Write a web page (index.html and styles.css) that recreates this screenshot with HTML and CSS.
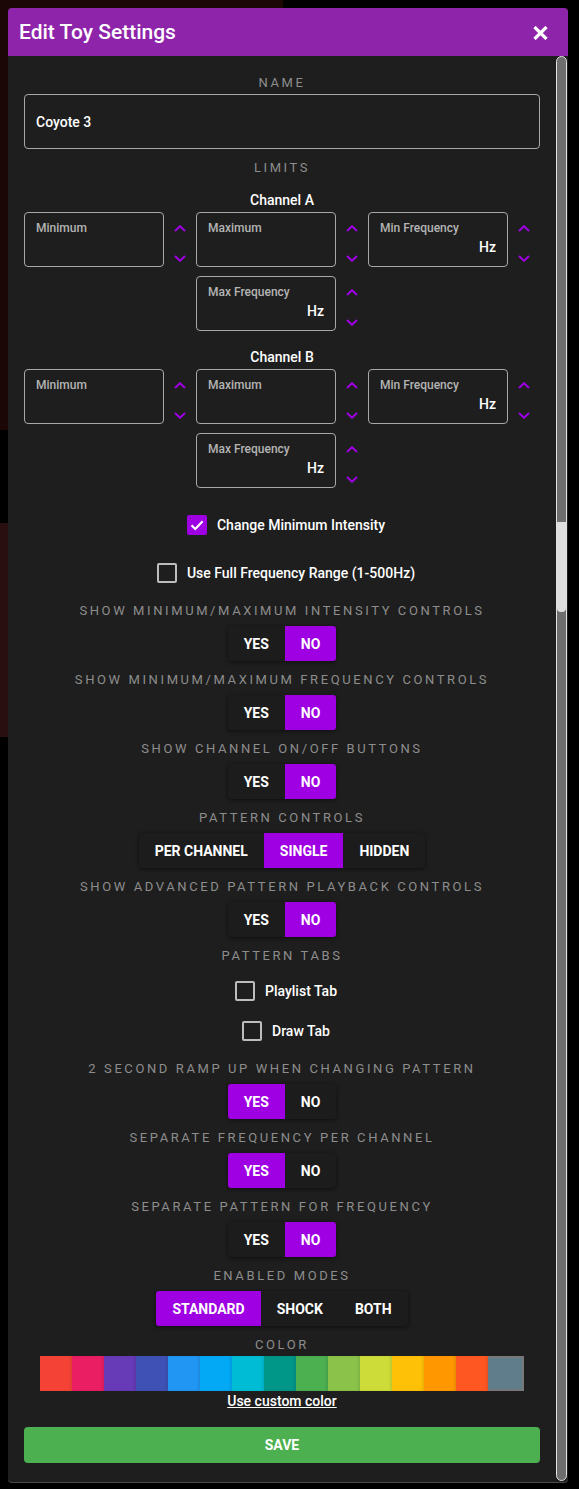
FILE: index.html
```html
<!DOCTYPE html>
<html lang="en">
<head>
<meta charset="utf-8">
<title>Edit Toy Settings</title>
<link rel="stylesheet" href="styles.css">
</head>
<body>
<div class="modal">
  <header class="modal-header">
    <h1 class="modal-title">Edit Toy Settings</h1>
    <button class="close-btn" aria-label="Close">
      <svg width="15" height="14" viewBox="0 0 15 14"><path d="M1.5 1 L13.5 13 M13.5 1 L1.5 13" stroke="#fff" stroke-width="3.2" fill="none"/></svg>
    </button>
  </header>
  <div class="modal-body">
    <div class="section-label">NAME</div>
    <div class="text-field">Coyote 3</div>

    <div class="section-label limits">LIMITS</div>

    <div class="channel-title first">Channel A</div>
    <div class="limit-grid">
      <div class="limit-cell"><div class="num-field"><span class="num-label">Minimum</span></div><div class="spinner"><svg class="chev" viewBox="0 0 12 7"><polyline points="1,6 6,1.2 11,6"/></svg><svg class="chev" viewBox="0 0 12 7"><polyline points="1,1 6,5.8 11,1"/></svg></div></div>
      <div class="limit-cell"><div class="num-field"><span class="num-label">Maximum</span></div><div class="spinner"><svg class="chev" viewBox="0 0 12 7"><polyline points="1,6 6,1.2 11,6"/></svg><svg class="chev" viewBox="0 0 12 7"><polyline points="1,1 6,5.8 11,1"/></svg></div></div>
      <div class="limit-cell"><div class="num-field"><span class="num-label">Min Frequency</span><span class="unit">Hz</span></div><div class="spinner"><svg class="chev" viewBox="0 0 12 7"><polyline points="1,6 6,1.2 11,6"/></svg><svg class="chev" viewBox="0 0 12 7"><polyline points="1,1 6,5.8 11,1"/></svg></div></div>
      <div class="limit-cell mid"><div class="num-field"><span class="num-label">Max Frequency</span><span class="unit">Hz</span></div><div class="spinner"><svg class="chev" viewBox="0 0 12 7"><polyline points="1,6 6,1.2 11,6"/></svg><svg class="chev" viewBox="0 0 12 7"><polyline points="1,1 6,5.8 11,1"/></svg></div></div>
    </div>

    <div class="channel-title">Channel B</div>
    <div class="limit-grid">
      <div class="limit-cell"><div class="num-field"><span class="num-label">Minimum</span></div><div class="spinner"><svg class="chev" viewBox="0 0 12 7"><polyline points="1,6 6,1.2 11,6"/></svg><svg class="chev" viewBox="0 0 12 7"><polyline points="1,1 6,5.8 11,1"/></svg></div></div>
      <div class="limit-cell"><div class="num-field"><span class="num-label">Maximum</span></div><div class="spinner"><svg class="chev" viewBox="0 0 12 7"><polyline points="1,6 6,1.2 11,6"/></svg><svg class="chev" viewBox="0 0 12 7"><polyline points="1,1 6,5.8 11,1"/></svg></div></div>
      <div class="limit-cell"><div class="num-field"><span class="num-label">Min Frequency</span><span class="unit">Hz</span></div><div class="spinner"><svg class="chev" viewBox="0 0 12 7"><polyline points="1,6 6,1.2 11,6"/></svg><svg class="chev" viewBox="0 0 12 7"><polyline points="1,1 6,5.8 11,1"/></svg></div></div>
      <div class="limit-cell mid"><div class="num-field"><span class="num-label">Max Frequency</span><span class="unit">Hz</span></div><div class="spinner"><svg class="chev" viewBox="0 0 12 7"><polyline points="1,6 6,1.2 11,6"/></svg><svg class="chev" viewBox="0 0 12 7"><polyline points="1,1 6,5.8 11,1"/></svg></div></div>
    </div>

    <div class="check-row top-check">
      <span class="checkbox checked"><svg viewBox="0 0 20 20" width="20" height="20"><path d="M4.5 10.2 L8.3 14 L15.6 6.2" stroke="#fff" stroke-width="2.2" fill="none"/></svg></span>
      <span class="check-text">Change Minimum Intensity</span>
    </div>
    <div class="check-row second-check">
      <span class="checkbox"></span>
      <span class="check-text">Use Full Frequency Range (1-500Hz)</span>
    </div>

    <div class="section-label after-check">SHOW MINIMUM/MAXIMUM INTENSITY CONTROLS</div>
    <div class="toggle-group"><span class="tg-btn">YES</span><span class="tg-btn on">NO</span></div>

    <div class="section-label">SHOW MINIMUM/MAXIMUM FREQUENCY CONTROLS</div>
    <div class="toggle-group"><span class="tg-btn">YES</span><span class="tg-btn on">NO</span></div>

    <div class="section-label">SHOW CHANNEL ON/OFF BUTTONS</div>
    <div class="toggle-group"><span class="tg-btn">YES</span><span class="tg-btn on">NO</span></div>

    <div class="section-label">PATTERN CONTROLS</div>
    <div class="toggle-group"><span class="tg-btn">PER CHANNEL</span><span class="tg-btn on">SINGLE</span><span class="tg-btn">HIDDEN</span></div>

    <div class="section-label">SHOW ADVANCED PATTERN PLAYBACK CONTROLS</div>
    <div class="toggle-group"><span class="tg-btn">YES</span><span class="tg-btn on">NO</span></div>

    <div class="section-label">PATTERN TABS</div>
    <div class="check-list">
      <div class="check-row"><span class="checkbox"></span><span class="check-text">Playlist Tab</span></div>
      <div class="check-row"><span class="checkbox"></span><span class="check-text">Draw Tab</span></div>
    </div>

    <div class="section-label after-check">2 SECOND RAMP UP WHEN CHANGING PATTERN</div>
    <div class="toggle-group"><span class="tg-btn on">YES</span><span class="tg-btn">NO</span></div>

    <div class="section-label">SEPARATE FREQUENCY PER CHANNEL</div>
    <div class="toggle-group"><span class="tg-btn on">YES</span><span class="tg-btn">NO</span></div>

    <div class="section-label">SEPARATE PATTERN FOR FREQUENCY</div>
    <div class="toggle-group"><span class="tg-btn">YES</span><span class="tg-btn on">NO</span></div>

    <div class="section-label">ENABLED MODES</div>
    <div class="toggle-group"><span class="tg-btn on">STANDARD</span><span class="tg-btn">SHOCK</span><span class="tg-btn">BOTH</span></div>

    <div class="section-label color-label">COLOR</div>
    <div class="swatches">
      <span class="swatch c1"></span><span class="swatch c2"></span><span class="swatch c3"></span><span class="swatch c4"></span><span class="swatch c5"></span><span class="swatch c6"></span><span class="swatch c7"></span><span class="swatch c8"></span><span class="swatch c9"></span><span class="swatch c10"></span><span class="swatch c11"></span><span class="swatch c12"></span><span class="swatch c13"></span><span class="swatch c14"></span><span class="swatch c15 selected"></span>
    </div>
    <div class="custom-color"><a class="custom-link">Use custom color</a></div>

    <button class="save-btn">SAVE</button>

    <div class="scrollbar"><div class="scroll-thumb"></div></div>
  </div>
</div>
</body>
</html>
```
FILE: styles.css
```css
* { box-sizing: border-box; }

html, body { height: 100%; }

body {
  margin: 0;
  padding: 8px 11px 0 8px;
  font-family: Roboto, "Liberation Sans", Arial, sans-serif;
  color: #fff;
  background:
    linear-gradient(#1c0707, #1c0707) 0 0 / 283px 430px no-repeat,
    linear-gradient(#290f0f, #290f0f) 0 523px / 8px 214px no-repeat,
    #000;
}

.modal {
  width: 560px;
  height: 1474px;
  background: #1e1e1e;
  border-radius: 4px;
  overflow: hidden;
  box-shadow: 0 1px 0 #4a4a4a;
  display: flex;
  flex-direction: column;
}

.modal-header {
  height: 48px;
  flex: none;
  background: #8e24aa;
  display: flex;
  align-items: center;
  justify-content: space-between;
  padding: 0 20px 0 11px;
}

.modal-title {
  margin: 0;
  font-size: 21px;
  font-weight: 500;
  line-height: 24px;
  color: #fff;
}

.close-btn {
  border: 0;
  background: none;
  padding: 0;
  width: 15px;
  height: 14px;
  display: block;
  margin-top: 1px;
}
.close-btn svg { display: block; }

.modal-body {
  position: relative;
  flex: 1;
  padding: 17px 28px 17px 16px;
}

.section-label {
  text-align: center;
  font-size: 13px;
  line-height: 20px;
  letter-spacing: 2.6px;
  color: #8d8d8d;
  margin-top: 9px;
  margin-bottom: 5px;
  white-space: nowrap;
}
.section-label:first-child { margin-top: 0; margin-bottom: 1px; }
.section-label.limits { margin-bottom: 0; }
.section-label.after-check { margin-top: 8px; }
.section-label.color-label { margin-bottom: 0; }

.text-field {
  height: 55px;
  border: 1px solid #a8a8a8;
  border-radius: 4px;
  padding: 0 11px;
  display: flex;
  align-items: center;
  font-size: 14px;
  font-weight: 500;
}

.channel-title {
  text-align: center;
  font-size: 14px;
  font-weight: 500;
  line-height: 20px;
  margin-top: 16px;
  margin-bottom: 2px;
}
.channel-title.first { margin-top: 12px; }

.limit-grid {
  display: grid;
  grid-template-columns: repeat(3, 172px);
  row-gap: 9px;
}

.limit-cell {
  display: flex;
}
.limit-cell.mid { grid-column: 2; }

.num-field {
  width: 140px;
  height: 55px;
  border: 1px solid #a8a8a8;
  border-radius: 4px;
  padding: 8px 11px 0;
  display: flex;
  flex-direction: column;
}

.num-label {
  font-size: 12px;
  font-weight: 500;
  line-height: 15px;
  color: #b4b4b4;
}

.unit {
  align-self: flex-end;
  font-size: 14px;
  font-weight: 500;
  line-height: 20px;
  margin-top: 1px;
}

.spinner {
  width: 32px;
  height: 55px;
  display: flex;
  flex-direction: column;
  align-items: center;
  justify-content: space-between;
  padding: 13px 0 5px;
}

.chev {
  width: 12px;
  height: 7px;
  display: block;
}
.chev polyline {
  fill: none;
  stroke: #9e00e3;
  stroke-width: 2;
}

.check-row {
  height: 40px;
  display: flex;
  align-items: center;
  justify-content: center;
  gap: 10px;
  padding-left: 8px;
}
.check-row.top-check { margin-top: 17px; }
.check-row.second-check { margin-top: 8px; }

.checkbox {
  width: 20px;
  height: 20px;
  border: 2px solid #bdbdbd;
  border-radius: 2px;
  flex: none;
}
.checkbox.checked {
  border: 0;
  background: #9e00e3;
}
.checkbox svg { display: block; }

.check-text {
  font-size: 14px;
  font-weight: 500;
  line-height: 20px;
}

.toggle-group {
  display: flex;
  justify-content: center;
  width: max-content;
  margin: 0 auto;
  border-radius: 3px;
  overflow: hidden;
  background: #1c1c1c;
  box-shadow: 0 1px 4px rgba(0, 0, 0, 0.55);
}

.tg-btn {
  height: 35px;
  padding: 0 16px;
  display: flex;
  align-items: center;
  font-size: 14px;
  font-weight: 700;
  color: #fff;
}
.tg-btn.on { background: #9e00e3; }

.swatches {
  display: flex;
  justify-content: center;
  margin-top: 1px;
}

.swatch {
  width: 32px;
  height: 35px;
  box-shadow: inset -2px 0 2px rgba(0, 0, 0, 0.08);
}
.c1 { background: #f44336; }
.c2 { background: #e91e63; }
.c3 { background: #673ab7; }
.c4 { background: #3f51b5; }
.c5 { background: #2196f3; }
.c6 { background: #03a9f4; }
.c7 { background: #00bcd4; }
.c8 { background: #009688; }
.c9 { background: #4caf50; }
.c10 { background: #8bc34a; }
.c11 { background: #cddc39; }
.c12 { background: #ffc107; }
.c13 { background: #ff9800; }
.c14 { background: #ff5722; }
.c15 { background: #607d8b; }
.swatch.selected {
  width: 36px;
  border: 2px solid #787878;
  border-left: 0;
  box-shadow: none;
}

.custom-color {
  text-align: center;
  line-height: 20px;
}
.custom-link {
  font-size: 14px;
  font-weight: 500;
  color: #fff;
  text-decoration: underline;
}

.save-btn {
  display: block;
  width: 100%;
  height: 36px;
  margin-top: 16px;
  border: 0;
  border-radius: 4px;
  background: #4caf50;
  color: #fff;
  font-family: Roboto, "Liberation Sans", Arial, sans-serif;
  font-size: 14px;
  font-weight: 700;
}

.scrollbar {
  position: absolute;
  top: 0;
  right: 1px;
  bottom: 1px;
  width: 11px;
  border: 1px solid #e2e2e2;
  border-radius: 6px;
  background: #6e6e6e;
  overflow: hidden;
}
.scroll-thumb {
  position: absolute;
  top: 465px;
  left: 0;
  right: 0;
  height: 90px;
  background: #dedede;
  border-radius: 0 0 4px 4px;
}
```
